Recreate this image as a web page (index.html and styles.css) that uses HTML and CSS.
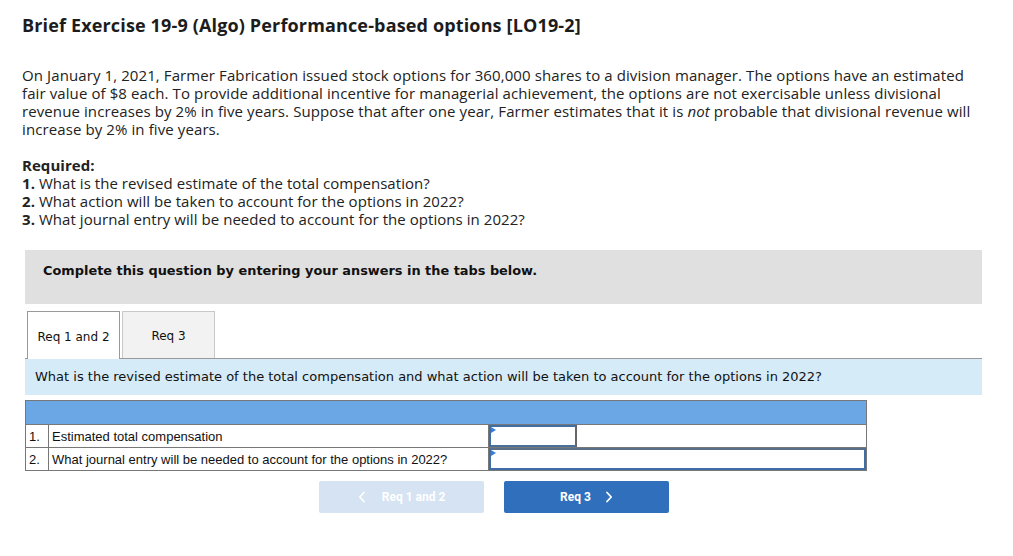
FILE: index.html
```html
<!DOCTYPE html>
<html>
<head>
<meta charset="utf-8">
<link rel="stylesheet" href="styles.css">
</head>
<body>
<div class="page">
  <h1 class="title">Brief Exercise 19-9 (Algo) Performance-based options [LO19-2]</h1>
  <p class="intro">On January 1, 2021, Farmer Fabrication issued stock options for 360,000 shares to a division manager. The options have an estimated fair value of $8 each. To provide additional incentive for managerial achievement, the options are not exercisable unless divisional revenue increases by 2% in five years. Suppose that after one year, Farmer estimates that it is <em>not</em> probable that divisional revenue will increase by 2% in five years.</p>
  <div class="required">
    <div class="req-head">Required:</div>
    <div><b>1.</b> What is the revised estimate of the total compensation?</div>
    <div><b>2.</b> What action will be taken to account for the options in 2022?</div>
    <div><b>3.</b> What journal entry will be needed to account for the options in 2022?</div>
  </div>
  <div class="work">
    <div class="notice">Complete this question by entering your answers in the tabs below.</div>
    <div class="tabs">
      <div class="tab active">Req 1 and 2</div>
      <div class="tab">Req 3</div>
    </div>
    <div class="prompt">What is the revised estimate of the total compensation and what action will be taken to account for the options in 2022?</div>
    <table class="answers">
      <colgroup><col class="c1"><col class="c2"><col class="c3"></colgroup>
      <tr class="head"><td colspan="3"></td></tr>
      <tr>
        <td class="num">1.</td>
        <td class="label">Estimated total compensation</td>
        <td class="cell"><div class="input short"><span class="flag"></span></div></td>
      </tr>
      <tr>
        <td class="num">2.</td>
        <td class="label">What journal entry will be needed to account for the options in 2022?</td>
        <td class="cell"><div class="input wide"><span class="flag"></span></div></td>
      </tr>
    </table>
    <div class="nav">
      <div class="btn prev"><svg class="chev" width="8" height="12" viewBox="0 0 8 12"><path d="M6 1.5 L1.8 6 L6 10.5" fill="none" stroke="#fff" stroke-width="1.8" stroke-linecap="round" stroke-linejoin="round"/></svg><span>Req 1 and 2</span></div>
      <div class="btn next"><span>Req 3</span><svg class="chev" width="8" height="12" viewBox="0 0 8 12"><path d="M2 1.5 L6.2 6 L2 10.5" fill="none" stroke="#fff" stroke-width="1.8" stroke-linecap="round" stroke-linejoin="round"/></svg></div>
    </div>
  </div>
</div>
</body>
</html>
```

FILE: styles.css
```css
html, body {
  margin: 0;
  padding: 0;
  background: #fff;
}
.page {
  width: 960px;
  padding: 13px 0 0 22px;
  font-family: "Open Sans", "Liberation Sans", sans-serif;
  color: #222;
}
.title {
  margin: 0;
  font-size: 18px;
  line-height: 24px;
  font-weight: 700;
  letter-spacing: 0.15px;
  color: #1c1c1c;
}
.intro {
  margin: 29px 0 0;
  font-size: 15px;
  letter-spacing: 0.1px;
  line-height: 18px;
}
.required {
  margin-top: 18px;
  font-size: 15px;
  letter-spacing: 0.05px;
  line-height: 18px;
}
.req-head {
  font-weight: 700;
}
.work {
  margin: 22px 0 0 3px;
  width: 957px;
}
.notice {
  background: #e0e0e0;
  height: 54px;
  box-sizing: border-box;
  padding: 13px 18px;
  font-family: "DejaVu Sans", Verdana, sans-serif;
  font-weight: 700;
  font-size: 12.9px;
  color: #111;
}
.tabs {
  display: flex;
  gap: 2px;
  margin-top: 7px;
  padding-left: 2px;
  border-bottom: 1px solid #999;
  height: 47px;
}
.tab {
  width: 93px;
  box-sizing: border-box;
  border: 1px solid #c8c8c8;
  border-bottom: none;
  background: #f2f2f2;
  font-family: "DejaVu Sans", Verdana, sans-serif;
  font-size: 12px;
  color: #111;
  display: flex;
  align-items: center;
  justify-content: center;
  padding-top: 2px;
}
.tab.active {
  background: #fff;
  border-color: #999;
  margin-bottom: -1px;
}
.prompt {
  background: #d6ebf8;
  height: 36px;
  box-sizing: border-box;
  padding: 10px 10px;
  font-family: "DejaVu Sans", Verdana, sans-serif;
  font-size: 13px;
  color: #111;
}
.answers {
  margin-top: 5px;
  width: 842px;
  table-layout: fixed;
  border-collapse: collapse;
  font-family: "Liberation Sans", Arial, sans-serif;
  font-size: 13px;
  color: #111;
}
.c1 { width: 23px; }
.c2 { width: 440px; }
.answers td {
  border: 1px solid #777;
  padding: 0;
  height: 22px;
}
.answers .head td {
  background: #6ba7e4;
  height: 23px;
}
.answers .num {
  padding-left: 3px;
}
.answers .label {
  padding-left: 3px;
}
.answers .cell {
  vertical-align: top;
}
.input {
  position: relative;
  height: 22px;
  box-sizing: border-box;
  border: 2px solid #3f6ea6;
  background: #fff;
}
.input.short {
  width: 88px;
  border-color: #3f6ea6 #666 #4a6f9c #3f6ea6;
}
.input.wide {
  width: 100%;
  border-color: #5a6f8a #3f6ea6 #3f6ea6 #3f6ea6;
}
.flag {
  position: absolute;
  left: 0;
  top: 0;
  width: 0;
  height: 0;
  border-top: 3px solid transparent;
  border-bottom: 3px solid transparent;
  border-left: 5px solid #3a7fd5;
}
.nav {
  display: flex;
  gap: 20px;
  margin: 10px 0 0 294px;
}
.btn {
  width: 165px;
  height: 32px;
  border-radius: 2px;
  display: flex;
  align-items: center;
  justify-content: center;
  gap: 14px;
  font-family: Roboto, "Liberation Sans", sans-serif;
  font-weight: 700;
  font-size: 12px;
  color: #fff;
}
.btn .chev {
  display: block;
}
.prev {
  background: #d5e3f3;
  gap: 16px;
}
.next {
  background: #2f6fbc;
}
```
